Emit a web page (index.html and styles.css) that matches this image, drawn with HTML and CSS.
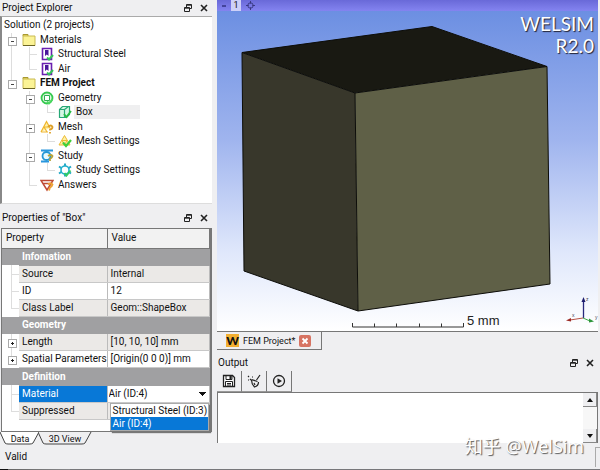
FILE: index.html
```html
<!DOCTYPE html>
<html lang="en">
<head>
<meta charset="utf-8">
<title>WELSIM</title>
<link rel="stylesheet" href="styles.css">
</head>
<body>
<svg class="defs" aria-hidden="true">
  <symbol id="float" viewBox="0 0 8 8"><path d="M2.5 3V.5h5v4H6M2.5 1.2h5M.5 3.5h5v4h-5zM.5 4.2h5" fill="none" stroke="#222"/></symbol>
  <symbol id="close" viewBox="0 0 8 8"><path d="M1 1l6 6M7 1L1 7" fill="none" stroke="#222" stroke-width="1.6"/></symbol>
  <symbol id="folder" viewBox="0 0 14 14"><path d="M1 3V1.5h5V3" fill="#e8d860" stroke="#a89830"/><path d="M1 3h12v9.500H1z" fill="#fbf396" stroke="#c9ba52"/><path d="M1 12.500h12" stroke="#6b6424"/></symbol>
  <symbol id="book" viewBox="0 0 14 14"><path d="M2.500 1.500h9v11h-9z" fill="#fff" stroke="#6a1fb0" stroke-width="1.600"/><path d="M5 3h3.500v6L6.800 7.500 5 9z" fill="#4a169a"/><path d="M7 10.500l2 2L13 8" fill="none" stroke="#35c35a" stroke-width="2"/></symbol>
  <symbol id="geometry" viewBox="0 0 14 14"><circle cx="7" cy="7" r="5.500" fill="#dff8df" stroke="#35c94f" stroke-width="1.800"/><path d="M4.500 4.500h5v5h-5z" fill="#fff" stroke="#2eae52"/><path d="M7 10.500l2 2L12.500 8" fill="none" stroke="#4bd860" stroke-width="1.800"/></symbol>
  <symbol id="cube" viewBox="0 0 14 14"><path d="M1.500 4.500l3-3h7v8l-3 3h-7zM1.500 4.500h5v8M6.500 4.500l4-3" fill="#d5f6e4" stroke="#27a877" stroke-width="1.200"/><path d="M6 9l2.500 3L13 6" fill="none" stroke="#28bd45" stroke-width="1.800"/></symbol>
  <symbol id="mesh" viewBox="0 0 14 14"><path d="M1 12L6.500 1.500 10 8M1 12h7M4 7h4M4 7l3 5" fill="#fff0a8" stroke="#efb52c" stroke-width="1.200"/><path d="M8 7q3-3 4.500 0 0 2-2.500 2.500v1M10 12v1.500" fill="none" stroke="#dda028" stroke-width="1.800"/></symbol>
  <symbol id="meshset" viewBox="0 0 14 14"><path d="M1 11L6.500 1.500 12 11zM4 6.500h5L6.500 11z" fill="#fff2a5" stroke="#edbb35"/><path d="M5 8.500l3 3.500 5-6" fill="none" stroke="#41cf3b" stroke-width="2.200"/></symbol>
  <symbol id="study" viewBox="0 0 14 14"><path d="M1 1.500h12M1 12.500h8" stroke="#2996dd" stroke-width="1.800"/><circle cx="6.500" cy="7" r="4" fill="#e8faff" stroke="#2598d5" stroke-width="1.800"/><path d="M8 7q3-2 4.500 0-.5 2-2.500 3v2" fill="none" stroke="#b6a33b" stroke-width="1.800"/></symbol>
  <symbol id="gear" viewBox="0 0 14 14"><path d="M7 .5v3M7 10.500v3M1 3.500l3 2M13 3.500l-3 2M1 10.500l3-2M13 10.500l-3-2" stroke="#25a9c7" stroke-width="2"/><circle cx="7" cy="7" r="4" fill="#fff" stroke="#25b0cc" stroke-width="1.600"/><path d="M6.500 10l2 2.500 4-5" fill="none" stroke="#35cc63" stroke-width="2"/></symbol>
  <symbol id="answers" viewBox="0 0 14 14"><path d="M1 2.500h12L7 12zM3 5.500h8" fill="#fff" stroke="#bf4b37" stroke-width="1.500"/><path d="M8 6.500q3-2 4.500 0-.5 2-2.500 3l-1 3" fill="none" stroke="#eda131" stroke-width="1.800"/></symbol>
</svg>
<div class="app">
  <aside class="side">
    <section class="explorer">
      <header class="title"><h2>Project Explorer</h2><button aria-label="Float"><svg><use href="#float"/></svg></button><button aria-label="Close"><svg><use href="#close"/></svg></button></header>
      <ul class="tree">
        <li class="root">Solution (2 projects)</li>
        <li><i class="g tee box"></i><svg><use href="#folder"/></svg><span>Materials</span></li>
        <li><i class="g line"></i><i class="g tee"></i><svg><use href="#book"/></svg><span>Structural Steel</span></li>
        <li><i class="g line"></i><i class="g elbow"></i><svg><use href="#book"/></svg><span>Air</span></li>
        <li><i class="g elbow box"></i><svg><use href="#folder"/></svg><span class="strong">FEM Project</span></li>
        <li><i class="g"></i><i class="g tee box"></i><svg><use href="#geometry"/></svg><span>Geometry</span></li>
        <li><i class="g"></i><i class="g line"></i><i class="g elbow"></i><svg><use href="#cube"/></svg><span class="picked">Box</span></li>
        <li><i class="g"></i><i class="g tee box"></i><svg><use href="#mesh"/></svg><span>Mesh</span></li>
        <li><i class="g"></i><i class="g line"></i><i class="g elbow"></i><svg><use href="#meshset"/></svg><span>Mesh Settings</span></li>
        <li><i class="g"></i><i class="g tee box"></i><svg><use href="#study"/></svg><span>Study</span></li>
        <li><i class="g"></i><i class="g line"></i><i class="g elbow"></i><svg><use href="#gear"/></svg><span>Study Settings</span></li>
        <li><i class="g"></i><i class="g elbow"></i><svg><use href="#answers"/></svg><span>Answers</span></li>
      </ul>
    </section>
    <section class="properties">
      <header class="title"><h2>Properties of "Box"</h2><button aria-label="Float"><svg><use href="#float"/></svg></button><button aria-label="Close"><svg><use href="#close"/></svg></button></header>
      <div class="sheet">
        <table>
          <colgroup><col class="c-guide"><col class="c-name"><col></colgroup>
          <thead><tr><th colspan="2">Property</th><th>Value</th></tr></thead>
          <tbody>
            <tr class="group"><td></td><th colspan="2">Infomation</th></tr>
            <tr class="alt"><td><i class="g tee"></i></td><th>Source</th><td>Internal</td></tr>
            <tr><td><i class="g tee"></i></td><th>ID</th><td>12</td></tr>
            <tr class="alt"><td><i class="g elbow"></i></td><th>Class Label</th><td>Geom::ShapeBox</td></tr>
            <tr class="group"><td></td><th colspan="2">Geometry</th></tr>
            <tr class="alt"><td><i class="g tee box plus"></i></td><th>Length</th><td>[10, 10, 10] mm</td></tr>
            <tr><td><i class="g elbow box plus"></i></td><th>Spatial Parameters</th><td>[Origin(0 0 0)] mm</td></tr>
            <tr class="group"><td></td><th colspan="2">Definition</th></tr>
            <tr class="current"><td><i class="g tee"></i></td><th><label for="material">Material</label></th><td class="combo"><select id="material"><option>Air (ID:4)</option><option>Structural Steel (ID:3)</option></select>
              <ul class="menu"><li>Structural Steel (ID:3)</li><li class="on">Air (ID:4)</li></ul></td></tr>
            <tr class="alt"><td><i class="g elbow"></i></td><th>Suppressed</th><td></td></tr>
          </tbody>
        </table>
      </div>
      <nav class="tabs"><button class="active"><svg viewBox="0 0 40 13" preserveAspectRatio="none"><path d="M0 0l5 11q1 1 3 1h22q2 0 3-1L39 0"/></svg><span>Data</span></button><button><svg viewBox="0 0 54 13" preserveAspectRatio="none"><path d="M0 0l5 11q1 1 3 1h36q2 0 3-1L53 0"/></svg><span>3D View</span></button></nav>
    </section>
  </aside>
  <main class="work">
    <div class="viewbar"><span class="dash"></span><button>1</button><svg viewBox="0 0 10 10"><circle cx="5" cy="5" r="3" fill="none" stroke="#34347c"/><path d="M5 0v3M5 7v3M0 5h3M7 5h3" stroke="#34347c"/></svg></div>
    <div class="scene">
      <svg class="model" viewBox="217 11 381 320">
        <path d="M242 52.500L432 26.500 547 66.500 355 93z" fill="#191912"/>
        <path d="M242 52.500L355 93 358 311 244 271z" fill="#38372b"/>
        <path d="M355 93L547 66.500 550 284 358 311z" fill="#5f6047"/>
        <path d="M242 52.500L432 26.500 547 66.500 550 284 358 311 244 271zM242 52.500L355 93 547 66.500M355 93L358 311" fill="none" stroke="#0d0d09"/>
        <path d="M352.500 323v4h111v-4M374.500 323.500v3.500M396.500 323.500v3.500M419.500 323.500v3.500M441.500 323.500v3.500" fill="none" stroke="#333"/>
        <text class="scale" x="467" y="325">5 mm</text>
        <path d="M583.500 318v-17" stroke="#27277c" stroke-width="1.300"/><path d="M581.500 302l2-5 2 5z" fill="#1c1c6d"/>
        <path d="M583 318l-13 2" stroke="#b65245"/><path d="M571 318l-5 2.500 5 1z" fill="#9c2b25"/>
        <path d="M583 318l7 3" stroke="#3fab48"/><path d="M589 318.500l5 3-5 1z" fill="#2d963a"/>
        <text class="axis" x="586" y="301">z</text><text class="axis" x="572" y="317">x</text><text class="axis" x="595" y="319">y</text>
      </svg>
      <p class="brand">WELSIM<br>R2.0</p>
    </div>
    <div class="doctabs"><div class="doc"><b>W</b><span>FEM Project*</span><button aria-label="Close tab"><svg viewBox="0 0 8 8"><path d="M1.500 1.500l5 5M6.500 1.500l-5 5" stroke="#fff" stroke-width="1.800"/></svg></button></div></div>
    <section class="output">
      <header class="title"><h2><label for="log">Output</label></h2><button aria-label="Float"><svg><use href="#float"/></svg></button><button aria-label="Close"><svg><use href="#close"/></svg></button></header>
      <div class="tools">
        <button aria-label="Save"><svg viewBox="0 0 14 14"><path d="M1.500 1.500h9l2 2v9h-11z" fill="#fff" stroke="#222" stroke-width="1.300"/><path d="M4 1.500h6v4H4zM3.500 12.500v-5h7v5M5 9.500h4M5 11h4" fill="none" stroke="#222"/><path d="M7.500 2h2v3h-2z" fill="#222"/></svg></button>
        <button aria-label="Clear"><svg viewBox="0 0 14 14"><path d="M13 1L9.500 6M4.500 5.500l6 2M4.500 6q0 4 3 7 4-1 4-5M7 9l1 2M1 2l1 1M3 5l1 1M5 3h1M1 6h1" fill="none" stroke="#222" stroke-width="1.200"/></svg></button>
        <button aria-label="Run"><svg viewBox="0 0 14 14"><circle cx="7" cy="7" r="5.500" fill="none" stroke="#222" stroke-width="1.300"/><path d="M5.500 4.200L10 7l-4.500 2.800z" fill="#222"/></svg></button>
      </div>
      <div class="log"><textarea id="log" readonly></textarea><div class="scroll"><button aria-label="Scroll up"><i class="up"></i></button><button aria-label="Scroll down"><i class="down"></i></button></div></div>
    </section>
  </main>
  <footer class="status"><span>Valid</span><span class="mark">知乎 @WelSim</span><i class="grip"></i></footer>
</div>
</body>
</html>
```
FILE: styles.css
```css
* { box-sizing: border-box; }
body { margin: 0; background: #efeff1; color: #111; font: 10px/14px Roboto, "Noto Sans", "Noto Sans CJK SC", sans-serif; }
button { margin: 0; padding: 0; border: 0; background: none; font: inherit; color: inherit; }
ul, p, h2 { margin: 0; padding: 0; list-style: none; font: inherit; }
.defs { position: absolute; width: 0; height: 0; }
.app { display: grid; grid-template-columns: 36fr 64fr; grid-template-rows: 1fr 24px; min-height: 100vh; border-bottom: 2px solid; border-image: linear-gradient(to right, #111 10px, #666 10px, #88888b 72px, #77777a 72px) 2; }

.title { display: flex; align-items: center; gap: 8px; padding: 0 4px 0 2px; }
.title h2 { flex: 1; }
.title button, .title svg { display: block; width: 8px; height: 8px; }

.side { display: flex; flex-direction: column; min-width: 0; padding-right: 4px; }
.explorer .title { height: 16px; }
.tree { display: grid; grid-template-rows: repeat(12, 1fr); height: 188px; padding: 1px 0 11px; background: #fff; border-top: 1px solid #aaa; border-left: 2px solid #888; border-bottom: 1px solid #ddd; }
.tree li { display: flex; align-items: center; }
.tree .root { padding-left: 2px; }
.tree svg { width: 14px; height: 14px; margin: 0 2px; }
.tree span { padding-left: 2px; }
.tree .strong { font-weight: 700; }
.tree .picked { width: 66px; background: #efeff0; }

.g { position: relative; flex: none; align-self: stretch; display: block; width: 18px; }
.g.line::before, .g.tee::before, .g.elbow::before { content: ""; position: absolute; left: 9px; top: 0; bottom: 0; border-left: 1px solid #ddd; }
.g.elbow::before { bottom: 50%; }
.g.tee::after, .g.elbow::after { content: ""; position: absolute; left: 9px; right: 1px; top: 50%; border-top: 1px solid #ddd; }
.g.box::after { left: 6px; right: auto; width: 7px; height: 7px; margin-top: -3px; border: 1px solid #aaa; background: linear-gradient(#444, #444) center / 3px 1px no-repeat #fff; }
.g.plus::after { background: linear-gradient(#222, #222) center / 3px 1px no-repeat, linear-gradient(#222, #222) center / 1px 3px no-repeat #fff; }

.properties { display: flex; flex-direction: column; flex: 1; padding-top: 4px; }
.properties .title { height: 20px; }
.sheet { height: 204px; margin-left: 1px; background: #fff; border: 1px solid #777; border-right-width: 2px; }
table { width: 100%; height: 191px; table-layout: fixed; border-collapse: collapse; }
.c-guide { width: 17px; }
.c-name { width: 88px; }
th, td { padding: 0 0 0 3px; text-align: left; font-weight: 400; white-space: nowrap; border-right: 1px solid #bbb; border-bottom: 1px solid #c8c8c8; }
thead th { height: 19px; background: #f2f2f2; border-color: #777; padding-left: 4px; }
tbody td:first-child { height: 17px; padding: 0; border: 0; background: #fff; }
tbody .g { height: 17px; }
.alt { background: #ebe9e7; }
tbody .group td:first-child, .group th { background: #a0a0a2; border-color: #a0a0a2; color: #fff; font-weight: 700; }
.current th { background: #0878d7; color: #fff; }
.combo { position: relative; padding: 0; }
select { display: block; appearance: none; width: 100%; height: 16px; padding: 0 0 0 1px; border: 0; border-radius: 0; font: inherit; color: inherit; background: linear-gradient(to bottom right, #111 50%, transparent 50%) right 2px center / 4px 4px no-repeat, linear-gradient(to bottom left, #111 50%, transparent 50%) right 6px center / 4px 4px no-repeat, #fff; }
.menu { position: absolute; left: 2px; right: 0; top: 17px; z-index: 2; background: #fff; border: 1px solid #aaa; box-shadow: 2px 2px 1px #777; line-height: 13px; }
.menu li { padding-left: 2px; white-space: nowrap; }
.menu .on { background: #0878d7; color: #fff; }

.tabs { display: flex; height: 12px; line-height: 12px; font-size: 9px; }
.tabs button { position: relative; width: 40px; height: 13px; }
.tabs button + button { width: 54px; margin-left: -2px; }
.tabs svg { position: absolute; left: 0; top: 0; width: 100%; height: 100%; fill: #efeff1; stroke: #444; }
.tabs .active svg { fill: #fff; }
.tabs span { position: relative; }

.work { display: flex; flex-direction: column; min-width: 0; padding: 0 2px 2px 1px; }
.viewbar { display: flex; align-items: center; gap: 5px; height: 11px; padding-left: 5px; background: linear-gradient(#6969d8, #8484f0); }
.viewbar .dash { width: 4px; height: 2px; background: #44449c; }
.viewbar button { width: 10px; height: 11px; background: #cdd0f8; font-size: 9px; line-height: 11px; }
.viewbar svg { width: 9px; height: 9px; }
.scene { position: relative; background: linear-gradient(#6c8fe2, #9fb4ee 40%, #dfe7fb 75%, #fff); border-bottom: 1px solid #777; }
.model { display: block; width: 100%; }
.scale { font: 13px "Liberation Sans", sans-serif; fill: #222; }
.axis { font: 5px "Liberation Sans", sans-serif; fill: #445; }
.brand { position: absolute; right: 4px; top: 2px; text-align: right; color: #fff; font: 19px/22px Lato, sans-serif; text-shadow: 1px 1px 1px #223; }
.doctabs { display: flex; height: 18px; }
.doc { display: flex; align-items: center; gap: 4px; padding: 0 10px 0 9px; border-right: 1px solid #777; border-bottom: 1px solid #777; font-size: 9px; }
.doc b { width: 13px; height: 13px; background: #f2af31; color: #111; font: 900 12px/13px Lato, sans-serif; text-align: center; }
.doc button { width: 12px; height: 12px; padding: 2px; border-radius: 2px; background: #d77463; }
.doc button svg { display: block; width: 8px; height: 8px; }

.output { display: flex; flex-direction: column; flex: 1; padding-top: 4px; }
.output .title { height: 17px; padding-left: 1px; }
.tools { display: flex; height: 21px; }
.tools button { width: 25px; border-right: 1px solid #777; border-bottom: 1px solid #999; }
.tools svg { width: 14px; height: 14px; display: block; margin: auto; }
.log { display: flex; flex: 1; border: 1px solid #777; border-width: 1px 1px 0 1px; background: #fff; }
textarea { flex: 1; min-width: 0; height: 50px; border: 0; padding: 2px; resize: none; outline: 0; background: none; font: inherit; }
.scroll { display: flex; flex-direction: column; justify-content: space-between; width: 14px; background: #f7f7f7; }
.scroll button { display: grid; place-items: center; height: 14px; background: #efeff1; border: 1px solid #888; border-width: 0 1px 1px 0; }
.scroll i { border: 3px solid transparent; border-top-width: 0; border-bottom: 4px solid #111; }
.scroll .down { transform: rotate(180deg); }

.status { grid-column: 1 / -1; display: flex; align-items: center; padding-left: 5px; }
.mark { align-self: flex-start; margin: -10px 11px 0 auto; z-index: 1; color: #fff; font: 18px/22px "Open Sans", "Noto Sans CJK SC", sans-serif; text-shadow: 1px 1px 1px #555; }
.grip { width: 5px; height: 20px; border: 1px solid #aaa; border-width: 1px 0 0 1px; }
```
